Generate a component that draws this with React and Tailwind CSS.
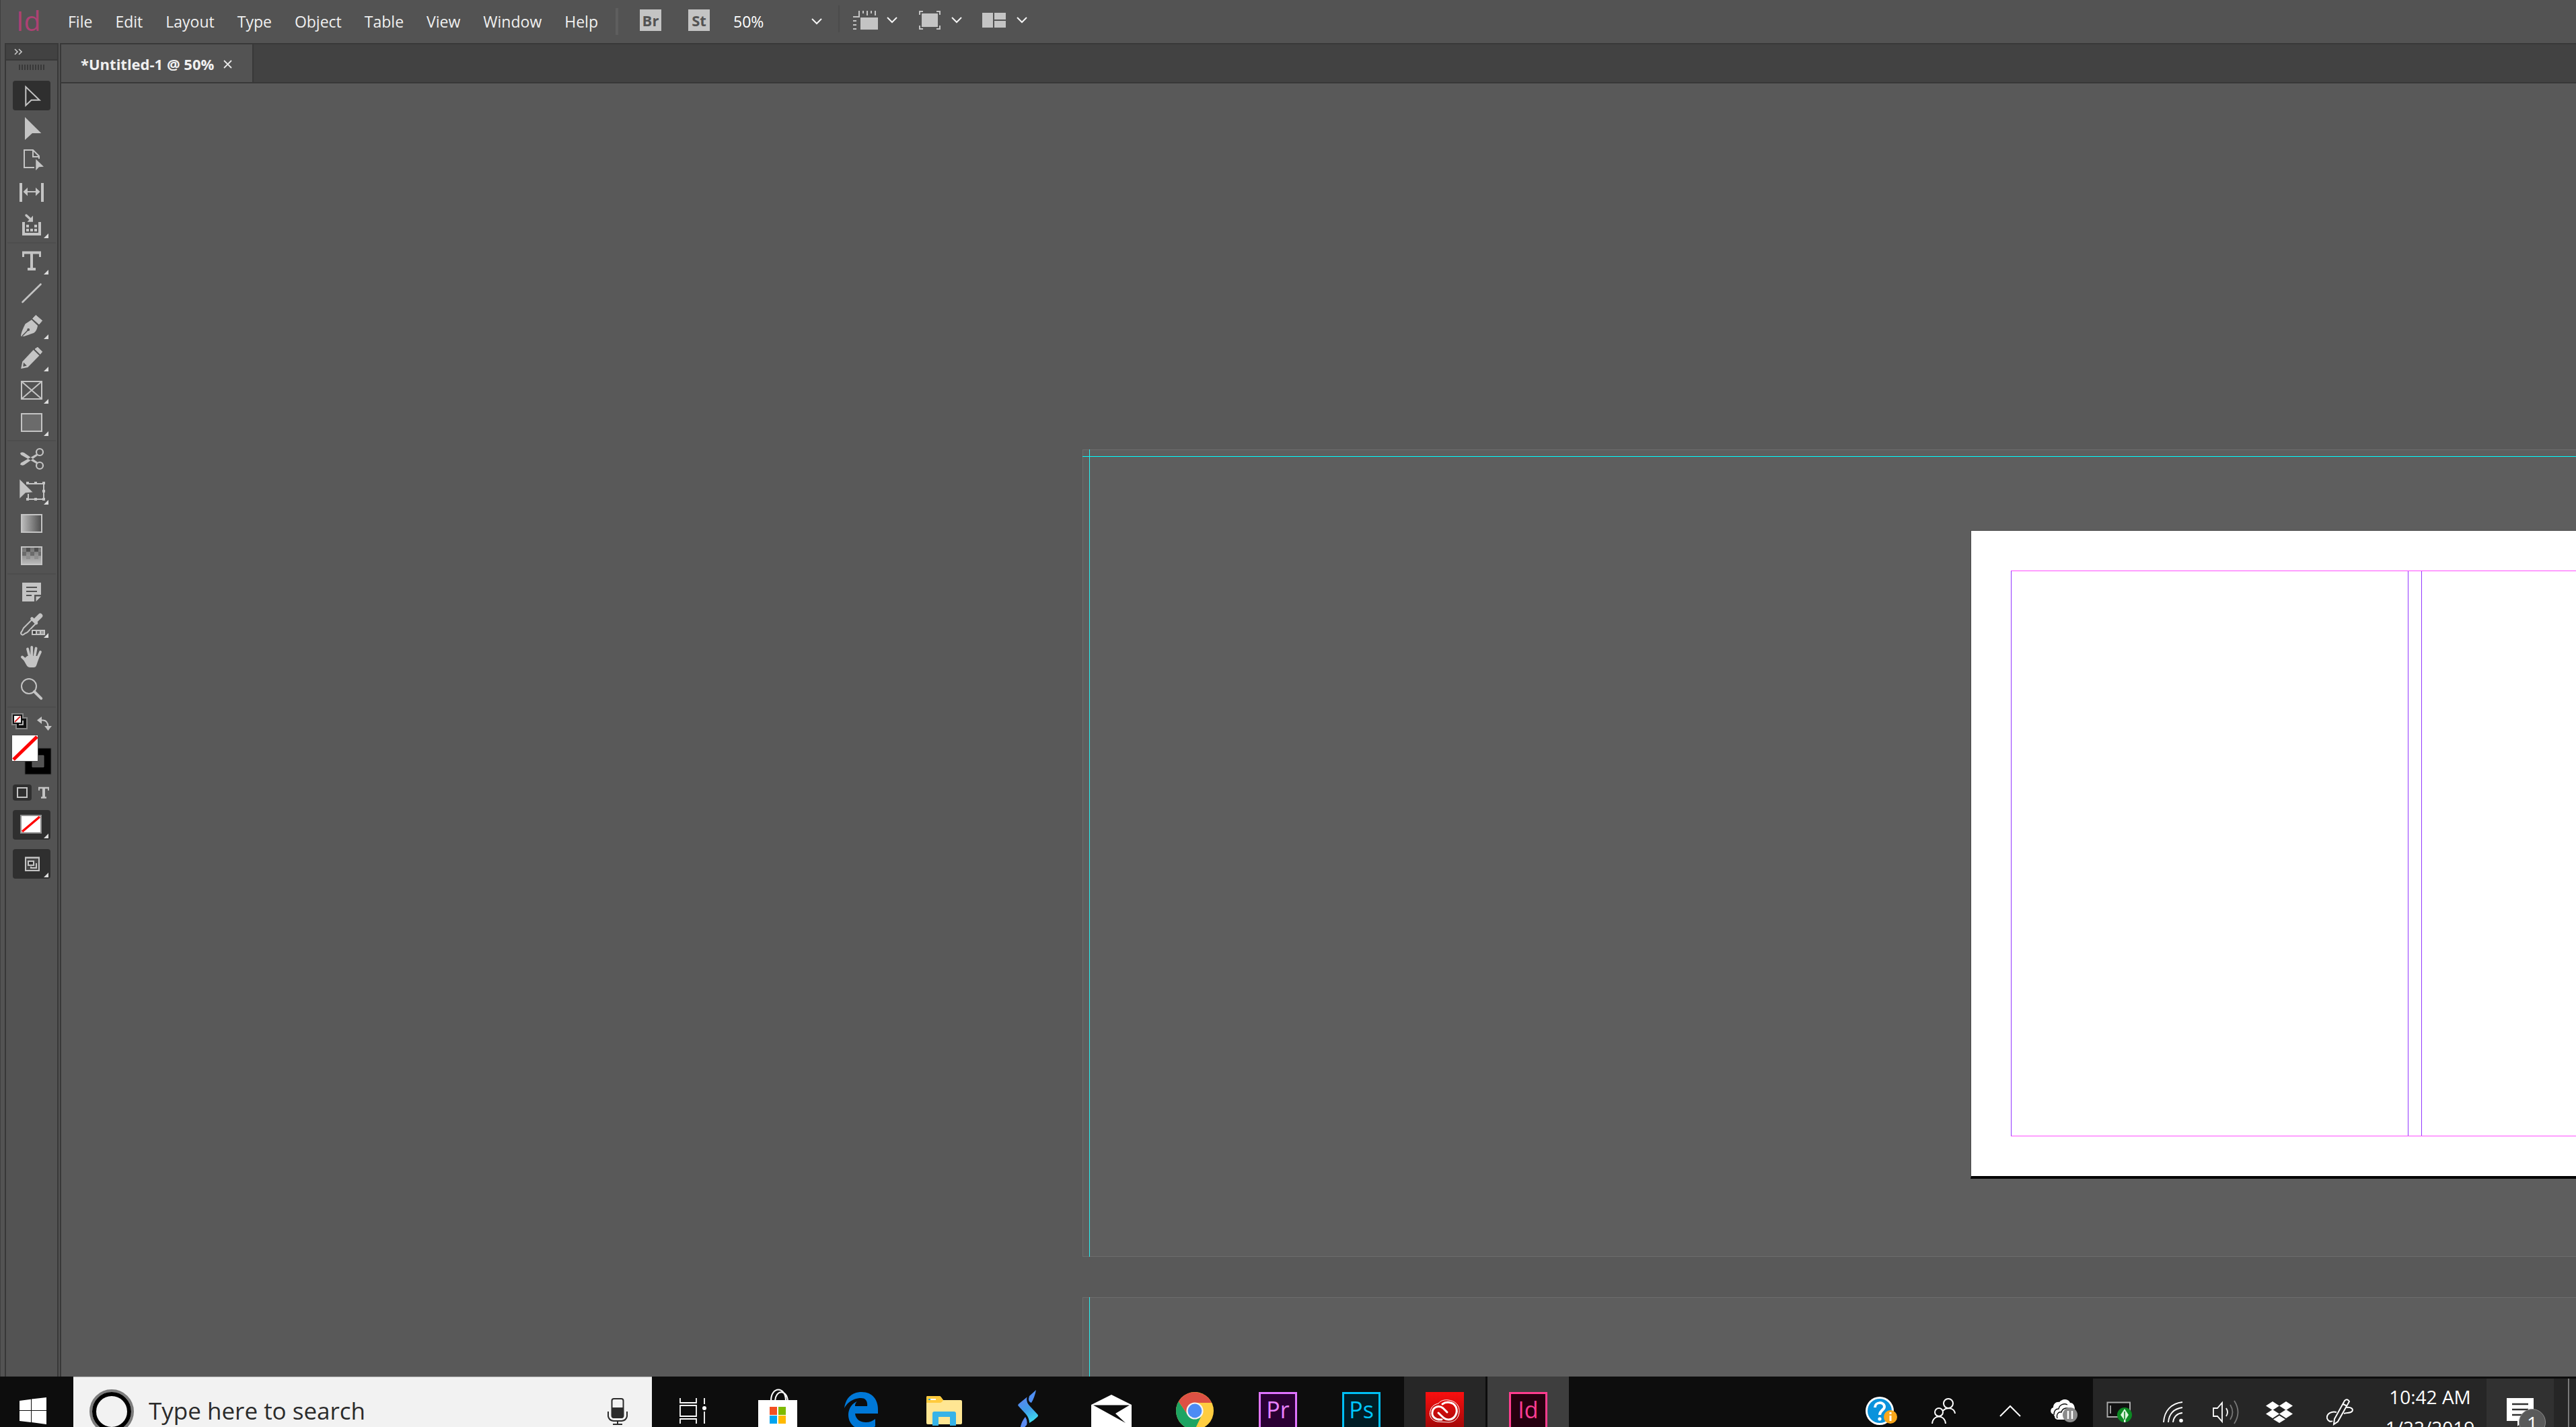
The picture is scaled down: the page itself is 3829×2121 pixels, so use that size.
import React from 'react'

const menus = ['File', 'Edit', 'Layout', 'Type', 'Object', 'Table', 'View', 'Window', 'Help']

const Chevron = () => (
  <svg className="w-4 h-[10px]" viewBox="0 0 16 10" fill="none" stroke="#f4f4f4" strokeWidth="2">
    <path d="M1 1 L8 8 L15 1" />
  </svg>
)

const MenuBar = () => {
  return (
    <header className="h-16 shrink-0 flex items-center border-l border-[#3f3f3f] text-[#f0f0f0] text-[23px]">
      <span className="w-[100px] pl-[23px] pb-1 text-[41px] leading-[56px] font-medium text-[#ad4173]">Id</span>
      <nav className="flex gap-[34px] pb-px">
        {menus.map((m) => (
          <button key={m} type="button" className="leading-8">{m}</button>
        ))}
      </nav>
      <div className="ml-[26px] w-1 h-10 bg-[#5e5e5e]" />
      <button type="button" className="ml-8 mb-1 size-8 bg-[#c4c4c4] text-[#535353] font-bold text-[22px] leading-8">Br</button>
      <button type="button" className="ml-10 mb-1 size-8 bg-[#c4c4c4] text-[#535353] font-bold text-[22px] leading-8">St</button>
      <div className="relative ml-[35px] w-[132px] flex items-center">
        <select aria-label="Zoom level" defaultValue="50%" className="appearance-none w-full bg-transparent leading-8 text-white">
          <option>50%</option>
        </select>
        <span className="absolute right-0 pointer-events-none"><Chevron /></span>
      </div>
      <div className="ml-6 mb-2 w-[2px] h-10 bg-[#4b4b4b]" />
      <button type="button" aria-label="View options" className="ml-5 mb-1 flex items-center gap-[13px]">
        <svg className="w-[37px] h-7" viewBox="0 0 37 28" fill="none" stroke="#c4c4c4" strokeWidth="2">
          <path d="M0 9 H9 V0 M15 0 V4 M21 0 V7 M27 0 V4 M33 0 V7 M0 15 H5 M0 21 H5 M0 27 H5" />
          <path d="M11 10 H37 V28 H11 Z" fill="#c4c4c4" stroke="none" />
        </svg>
        <Chevron />
      </button>
      <button type="button" aria-label="Screen mode" className="ml-8 mb-1 flex items-center gap-4">
        <svg className="w-8 h-7" viewBox="0 0 32 28" fill="none" stroke="#c4c4c4" strokeWidth="2">
          <path d="M1 6 V1 H6 M26 1 H31 V6 M31 22 V27 H26 M6 27 H1 V22" />
          <path d="M4 4 H28 V24 H4 Z" fill="#c4c4c4" stroke="none" />
        </svg>
        <Chevron />
      </button>
      <button type="button" aria-label="Arrange documents" className="ml-[30px] mb-1 flex items-center gap-4">
        <svg className="w-[35px] h-[22px]" viewBox="0 0 35 22" fill="#c4c4c4">
          <path d="M0 0 H16 V22 H0 Z M18 0 H35 V10 H18 Z M18 12 H35 V22 H18 Z" />
        </svg>
        <Chevron />
      </button>
    </header>
  )
}

const C = '#c4c4c4'
const D = '#535353'

const tools = [
  { name: 'Selection', active: true, art: <path d="M19.3 9 V36.6 L27.6 28.7 H39.6 Z" fill="none" stroke={C} strokeWidth="2" /> },
  { name: 'Direct selection', art: <path d="M18 6 V40 L29 30 H42.3 Z" fill={C} /> },
  {
    name: 'Page',
    art: (
      <>
        <path d="M32 33 H17 V7 H30 L39 16 V20 M30 7 V17 H39" fill="none" stroke={C} strokeWidth="2" />
        <path d="M34.3 20.5 V37.3 L39 32.3 L46 31.7 Z" fill={C} />
      </>
    ),
  },
  {
    name: 'Gap',
    art: (
      <>
        <path d="M10 8 H14 V36 H10 Z M42 8 H46 V36 H42 Z M15.5 21 L22 14.7 V27.3 Z M40.5 21 L34 14.7 V27.3 Z" fill={C} />
        <path d="M20 21 H36" stroke={C} strokeWidth="2" />
      </>
    ),
  },
  {
    name: 'Content collector',
    more: true,
    art: (
      <>
        <path d="M16 18 V36 H40 V18" fill="none" stroke={C} strokeWidth="4" />
        <path d="M20 22h4v4h-4z M32 22h4v4h-4z M20 28h4v4h-4z M26 28h4v4h-4z M32 28h4v4h-4z" fill={C} />
        <path d="M20 8 L27 14.5" stroke={C} strokeWidth="3.4" strokeLinecap="round" />
        <path d="M30 8.5 V17.8 H21.5 Z" fill={C} />
      </>
    ),
  },
  null,
  {
    name: 'Type',
    more: true,
    art: (
      <g fill="none" stroke={C}>
        <path d="M14 9.5 H42 M28 10 V34 M22 34 H34" strokeWidth="4" />
        <path d="M15.5 9 V16 M40.5 9 V16" strokeWidth="3" />
      </g>
    ),
  },
  { name: 'Line', art: <path d="M14.5 35 L41.5 8.5" stroke={C} strokeWidth="2.6" strokeLinecap="round" /> },
  {
    name: 'Pen',
    more: true,
    art: (
      <>
        <path d="M34.2 6.6 L43.6 14.6 L39 20 L29.6 11.6 Z" fill={C} stroke={C} strokeLinejoin="round" />
        <path d="M28 13.3 L37 22 C36.4 27 34 31.5 31 33 C26 34.5 20 37 16.5 38 L12 37.6 C12.4 32 16 25 18.5 19.5 Z" fill={C} />
        <path d="M14 37.5 L22.5 28.8" stroke={D} strokeWidth="1.6" />
        <circle cx="23.2" cy="28" r="2" fill={D} />
      </>
    ),
  },
  {
    name: 'Pencil',
    more: true,
    art: (
      <>
        <path d="M37 6.2 L43.6 12.8 L40.8 16.4 L33 8.8 Z" fill={C} stroke={C} strokeLinejoin="round" />
        <path d="M30.7 10 L39.4 18.6 L22.3 36 L12.2 38 L14.3 27.5 Z" fill={C} />
        <path d="M16 28.8 L20.8 33.6 L15.3 35 Z" fill={D} />
      </>
    ),
  },
  { name: 'Rectangle frame', more: true, art: <path d="M13 9 H43 V35 H13 Z L43 35 M43 9 L13 35" fill="none" stroke={C} strokeWidth="2" /> },
  { name: 'Rectangle', more: true, art: <path d="M13 9 H43 V35 H13 Z" fill="#6b6b6b" stroke={C} strokeWidth="2" /> },
  null,
  {
    name: 'Scissors',
    art: (
      <>
        <g fill="none" stroke={C} strokeWidth="2.2">
          <circle cx="40" cy="12" r="5" />
          <circle cx="40" cy="32" r="5" />
        </g>
        <path d="M11 13.4 C13 12 15 12 17 13 L37 27 L35.2 29.2 L27 24.5 L12 16 Z M11 30.6 C13 32 15 32 17 31 L37 17 L35.2 14.8 L27 19.5 L12 28 Z" fill={C} />
      </>
    ),
  },
  {
    name: 'Free transform',
    more: true,
    art: (
      <>
        <path d="M23 11 H46 V34 H23 V26" fill="none" stroke={C} strokeWidth="2" />
        <path d="M20 8h4v4h-4z M32 8h4v4h-4z M44 8h4v4h-4z M44 20h4v4h-4z M44 32h4v4h-4z M32 32h4v4h-4z M20 32h4v4h-4z" fill={C} />
        <path d="M10 4 V33.3 L18.8 24.8 L30 23.7 Z" fill={C} stroke={D} strokeWidth="0.6" />
      </>
    ),
  },
  {
    name: 'Gradient swatch',
    art: (
      <>
        <linearGradient id="swatch"><stop offset="0" stopColor="#bdbdbd" /><stop offset="1" stopColor="#4c4c4c" /></linearGradient>
        <path d="M13 9 H43 V35 H13 Z" fill="url(#swatch)" stroke={C} strokeWidth="2" />
      </>
    ),
  },
  {
    name: 'Gradient feather',
    art: (
      <>
        <linearGradient id="feather" x2="0" y2="1"><stop offset="0" stopColor="#6b6b6b" /><stop offset="1" stopColor="#bdbdbd" /></linearGradient>
        <path d="M13 9 H43 V35 H13 Z" fill="url(#feather)" stroke={C} strokeWidth="2" />
        <path d="M20 10h6v6h-6z M32 10h6v6h-6z" fill="#505050" />
        <path d="M14 16h6v6h-6z M26 16h6v6h-6z M38 16h4v6h-4z" fill="#6b6b6b" />
        <path d="M20 22h6v5h-6z M32 22h6v5h-6z" fill="#8e8e8e" />
      </>
    ),
  },
  null,
  {
    name: 'Note',
    art: (
      <>
        <path d="M14 8 H42 V26 H32 V36 H14 Z M34.5 28.5 H42 L34.5 36 Z" fill={C} />
        <path d="M20 15 H36 M20 21 H36 M20 27 H28" stroke={D} strokeWidth="2" />
      </>
    ),
  },
  {
    name: 'Color theme',
    more: true,
    art: (
      <>
        <path d="M28.5 15 L16 27.5 C14.5 29.5 14.8 31 13 33 C10.5 36 14 39 16.5 36.8 C18.5 34.5 20.5 35 22 33.5 L34 21" fill="none" stroke={C} strokeWidth="2" />
        <path d="M28.5 13.5 L35 20" stroke={C} strokeWidth="4.6" strokeLinecap="round" />
        <path d="M34 16 L40.8 9.2" stroke={C} strokeWidth="7" strokeLinecap="round" />
        <path d="M26.5 29 H49 V39 H26.5 Z" fill={D} />
        <path d="M28 30 H48 V38 H28 Z" fill={C} />
        <path d="M30 32h4v4h-4z" fill="#3c3c3c" />
        <path d="M36 32h4v4h-4z" fill="#6b6b6b" />
        <path d="M42 32h4v4h-4z" fill="#989898" />
      </>
    ),
  },
  {
    name: 'Hand',
    art: (
      <>
        <g stroke={C} strokeWidth="3.8" strokeLinecap="round">
          <path d="M22 10.5 L25.5 24 M28.2 8 V24 M34.6 9.5 L32 24 M41 15 L36 26" />
          <path d="M14 22.5 L22 30" strokeWidth="4" />
        </g>
        <path d="M21.5 21 H37.5 L38.5 25 L35.5 34 C34.5 37 33 38 31 38 H26 C23 38 21.5 36.5 20 34 L15.5 26 Z" fill={C} />
      </>
    ),
  },
  {
    name: 'Zoom',
    art: (
      <g fill="none" stroke={C}>
        <circle cx="24" cy="18" r="11" strokeWidth="2" />
        <path d="M32 26 L42.2 36.2" strokeWidth="4" strokeLinecap="round" />
      </g>
    ),
  },
]

const ToolButton = ({ tool }) => (
  <button type="button" aria-label={tool.name} className={tool.active ? 'block rounded bg-[#2f2f2f]' : 'block rounded'}>
    <svg className="block w-14 h-11" viewBox="0 0 56 44">
      {tool.art}
      {tool.more && <path d="M53 35 V42 H46 Z" fill="#dcdcdc" />}
    </svg>
  </button>
)

const Toolbox = () => {
  return (
    <aside className="w-20 shrink-0 border-t-2 border-x-2 border-[#383838]">
      <div className="h-6 border-b-2 border-[#383838] bg-[#424242] pl-3 flex items-center">
        <svg className="w-3 h-[10px]" viewBox="0 0 12 10" fill="none" stroke="#c9c9c9" strokeWidth="1.6">
          <path d="M1 1 L5 5 L1 9 M7 1 L11 5 L7 9" />
        </svg>
      </div>
      <svg className="mt-[6px] mx-auto w-10 h-2" viewBox="0 0 40 8" stroke="#383838" strokeWidth="2">
        <path d="M2 0V8 M6 0V8 M10 0V8 M14 0V8 M18 0V8 M22 0V8 M26 0V8 M30 0V8 M34 0V8 M38 0V8" />
      </svg>
      <div className="mt-4 flex flex-col items-center gap-1">
        {tools.map((t, i) => (t ? <ToolButton key={t.name} tool={t} /> : <div key={i} className="w-[72px] h-[2px] bg-[#4d4d4d]" />))}
        <div className="w-[72px] h-[2px] bg-[#4d4d4d]" />
      </div>
      <div className="mt-[5px] px-2 flex justify-between">
        <button type="button" aria-label="Default fill and stroke">
          <svg className="w-6 h-6" viewBox="0 0 24 24">
            <path d="M0 0 H18 V6 H24 V24 H6 V18 H0 Z" fill="#858585" />
            <path d="M2 2 H16 V8 H22 V22 H8 V16 H2 Z" fill="#111" />
            <path d="M4 4 H14 V14 H4 Z" fill="#fff" />
            <path d="M5 13 L13 5" stroke="#d22" strokeWidth="1.8" />
            <path d="M17 11 V17 H11" fill="none" stroke="#ddd" strokeWidth="1.6" />
          </svg>
        </button>
        <button type="button" aria-label="Swap fill and stroke" className="mt-2">
          <svg className="w-[22px] h-[22px]" viewBox="0 0 22 22">
            <path d="M6 5.5 H9 Q16 6 16.5 15" fill="none" stroke={C} strokeWidth="2" />
            <path d="M0 5.5 L7 0 V11 Z M11 14 H22 L16.5 21 Z" fill={C} />
          </svg>
        </button>
      </div>
      <svg className="mt-[5px] ml-2 w-[60px] h-[60px]" viewBox="0 0 60 60">
        <path d="M20 20 H59 V59 H20 Z" fill="#000" stroke="#454545" />
        <path d="M31 31 H48 V48 H31 Z" fill={D} stroke="#606060" />
        <path d="M0.5 0.5 H39.5 V39.5 H0.5 Z" fill="#fff" stroke="#484848" />
        <path d="M3 37 L38 3" stroke="#f00" strokeWidth="5" />
      </svg>
      <div className="mt-[14px] px-[10px] flex gap-[10px] items-center">
        <button type="button" aria-label="Formatting affects container" className="rounded bg-[#2f2f2f]">
          <svg className="w-7 h-6" viewBox="0 0 28 24"><path d="M7 5 H21 V19 H7 Z" fill="none" stroke={C} strokeWidth="2" /></svg>
        </button>
        <button type="button" aria-label="Formatting affects text">
          <svg className="w-4 h-[18px]" viewBox="0 0 16 18" fill="none" stroke={C}>
            <path d="M0 2 H16 M4 16.5 H12" strokeWidth="2.4" />
            <path d="M8 2 V17" strokeWidth="4" />
            <path d="M1 2 V6 M15 2 V6" strokeWidth="1.8" />
          </svg>
        </button>
      </div>
      <div className="mt-[14px] flex flex-col items-center gap-[14px]">
        <ToolButton
          tool={{
            name: 'Apply none',
            active: true,
            more: true,
            art: (
              <>
                <path d="M12 8 H42 V34 H12 Z" fill="#fff" stroke="#8f8f8f" strokeWidth="2" />
                <path d="M14 32 L40 10" stroke="#f00" strokeWidth="3.4" />
              </>
            ),
          }}
        />
        <ToolButton
          tool={{
            name: 'View mode',
            active: true,
            more: true,
            art: (
              <g fill="none" stroke={C} strokeWidth="2">
                <path d="M19 13 H39 V32 H19 Z M18 12.5 H40" fill="#474747" />
                <path d="M23 18 H31 V24 H23 Z" fill="#2f2f2f" />
                <path d="M34 22 H35 V28 H27 V26" />
              </g>
            ),
          }}
        />
      </div>
    </aside>
  )
}

const DocumentWindow = () => {
  return (
    <main className="flex-1 min-w-0 ml-[2px] flex flex-col border-t-2 border-l-2 border-[#383838]">
      <div className="h-[58px] shrink-0 flex border-b-2 border-[#383838] bg-[#424242]">
        <div className="flex items-center gap-[14px] pl-[29px] pr-[30px] pt-[2px] border-r-2 border-[#383838] bg-[#535353] text-[#f0f0f0]">
          <span className="text-[22px] font-bold">*Untitled-1 @ 50%</span>
          <button type="button" aria-label="Close tab">
            <svg className="w-[13px] h-[13px]" viewBox="0 0 13 13" stroke="#e8e8e8" strokeWidth="1.8"><path d="M1 1 L12 12 M12 1 L1 12" /></svg>
          </button>
        </div>
      </div>
      {/* pasteboard with the first spread and the top of the next one */}
      <div className="relative flex-1 overflow-hidden bg-[#595959]">
        <div className="absolute left-[1518px] top-[544px] right-0 h-[1200px] border border-r-0 border-[#6d6d6d] bg-[#5e5e5e]" />
        <div className="absolute left-[1528px] top-[544px] w-px h-[1200px] bg-[#28eef0]" />
        <div className="absolute left-[1518px] top-[554px] right-0 h-px bg-[#00ffff]" />
        <div className="absolute left-[1518px] top-[1804px] right-0 bottom-0 border-t border-l border-[#6d6d6d] bg-[#5e5e5e]" />
        <div className="absolute left-[1528px] top-[1804px] w-px bottom-0 bg-[#28eef0]" />
        <div className="absolute left-[2838px] top-[664px] right-0 h-[964px] border-t border-l border-[#4a4a4a] border-b-4 border-b-black bg-white">
          <div className="absolute left-[59px] top-[59px] right-0 h-[841px] border-y border-y-[#ff4cff] border-l border-l-[#9437ff]">
            <div className="absolute left-[589px] top-0 bottom-0 w-[21px] border-x border-[#9437ff]" />
          </div>
        </div>
      </div>
    </main>
  )
}

const AppTile = ({ label, tile }) => (
  <span className={`size-[57px] border-[3px] pb-1 flex items-center justify-center text-[34px] leading-none font-medium ${tile}`}>{label}</span>
)

const apps = [
  {
    name: 'Store',
    icon: (
      <svg className="w-[58px] h-[66px]" viewBox="0 0 58 66">
        <path d="M19 18 C19 -4 41 -4 41 18 M25 18 C26 2 42 0 44 18" fill="none" stroke="#fff" strokeWidth="2" />
        <path d="M0 17 H58 V62 H0 Z" fill="#fff" />
        <path d="M17 27h11v12h-11z" fill="#f25022" />
        <path d="M30 27h11v12h-11z" fill="#7fba00" />
        <path d="M17 40h11v12h-11z" fill="#00a4ef" />
        <path d="M30 40h11v12h-11z" fill="#ffb900" />
      </svg>
    ),
  },
  {
    name: 'Edge',
    icon: (
      <svg className="w-[50px] h-14" viewBox="0 0 50 56">
        <path d="M0 24 C2 8 12 0 26 0 C42 0 50 12 50 26 V32 H16 C17 41 24 45 32 45 C38 45 42 43 46 40 V51 C41 54 36 56 30 56 C15 56 6 46 6 34 C6 25 11 17 19 14 C16 17 16 19 16 21 H34 C35 13 31 9 25 9 C14 9 5 15 0 24 Z" fill="#0078d7" />
      </svg>
    ),
  },
  {
    name: 'File Explorer',
    icon: (
      <svg className="w-[53px] h-[46px]" viewBox="0 0 53 46">
        <path d="M0 3 Q0 1 2 1 H19 Q21 1 22 3 L25 7 H51 Q53 7 53 9 V41 Q53 43 51 43 H2 Q0 43 0 41 Z" fill="#ffe693" />
        <path d="M0 3 Q0 1 2 1 H19 Q21 1 22 3 L25 7 Q23 11 20 11 H0 Z" fill="#ffcb3d" />
        <path d="M3 5 H14 V7 H3 Z" fill="#fff" />
        <path d="M3 5 H6 V7 H3 Z" fill="#2fa8e0" />
        <path d="M9 45 V27 Q9 24 12 24 H41 Q44 24 44 27 V45 H35 V32 H18 V45 Z" fill="#36b3e8" />
      </svg>
    ),
  },
  {
    name: 'Sway',
    icon: (
      <svg className="w-[30px] h-[62px]" viewBox="0 0 30 62">
        <linearGradient id="ribbon" x1="0.2" y1="0" x2="0.6" y2="1"><stop offset="0" stopColor="#5c86f0" /><stop offset="0.5" stopColor="#3f9be8" /><stop offset="1" stopColor="#3fdcf0" /></linearGradient>
        <path d="M27 0 Q25 11 20 19 Q14 17 17 9 Z" fill="#4f8ff2" />
        <path d="M13.5 10.5 Q12 18 17 23 L29 36 Q31 38 29 40 Q24 45 17 49 Q17 42 12 36 L1 24 Q-1 22 2 20 Z" fill="url(#ribbon)" />
        <path d="M11 40 Q15 46 13 52 L4 62 V54 Q6 46 11 40 Z" fill="#5c8cf2" />
      </svg>
    ),
  },
  {
    name: 'Mail',
    icon: (
      <svg className="w-[60px] h-12" viewBox="0 0 60 48">
        <path d="M0 15 L30 0 L60 15 V48 H0 Z" fill="#fff" />
        <path d="M3 15.5 H57 L36 28 L51 42 Z" fill="#0d0d0d" />
      </svg>
    ),
  },
  {
    name: 'Chrome',
    icon: (
      <svg className="size-14" viewBox="0 0 56 56">
        <circle cx="28" cy="28" r="28" fill="#ffcd40" />
        <path d="M28 28 L38.4 34 L28 56 A28 28 0 0 1 3.8 14 L17.6 34 Z" fill="#1da462" />
        <path d="M28 16 H53 A28 28 0 0 0 3.8 14 L17.6 34 L28 28 Z" fill="#dd5144" />
        <circle cx="28" cy="28" r="12.6" fill="#f4f4f4" />
        <circle cx="28" cy="28" r="10.4" fill="#4c8bf5" />
      </svg>
    ),
  },
  { name: 'Premiere Pro', icon: <AppTile label="Pr" tile="border-[#e073ff] text-[#e882ff] bg-[#2a0033]" /> },
  { name: 'Photoshop', icon: <AppTile label="Ps" tile="border-[#00c0f5] text-[#00c8ff] bg-[#001d26]" /> },
  {
    name: 'Creative Cloud',
    state: 'bg-[#272727]',
    icon: (
      <svg className="size-[57px]" viewBox="0 0 57 57">
        <linearGradient id="cc" x2="0" y2="1"><stop offset="0" stopColor="#fa0f0f" /><stop offset="1" stopColor="#9c0808" /></linearGradient>
        <path d="M0 0 H57 V57 H0 Z" fill="url(#cc)" />
        <path d="M17 44 C8 42 5 35 7 28 C9 20 15 18 19 17 C22 13 28 11 34 12 C44 13 51 20 50 30 C49 39 43 45 34 45 Z" fill="none" stroke="#fff" strokeWidth="1" />
        <g fill="none" stroke="#fff" strokeWidth="3" strokeLinecap="round">
          <path d="M24 41 C14 42 9 36 10 30 C11 22 20 19 26 24 L32 30" />
          <path d="M25 18 C30 14 41 14 45 22 C49 31 43 41 34 41 C29 41 27 39 19 31" />
        </g>
      </svg>
    ),
  },
  { name: 'InDesign', state: 'bg-[#3e3e3e]', icon: <AppTile label="Id" tile="border-[#ff3d8f] text-[#ff3d93] bg-[#26000f]" /> },
]

const SystemTray = () => {
  return (
    <div className="ml-auto flex text-white">
      <button type="button" aria-label="Help" className="w-[60px] flex items-center justify-center">
        <svg className="w-12 h-11" viewBox="0 0 48 44">
          <circle cx="21" cy="22" r="21" fill="#fff" />
          <circle cx="21" cy="22" r="18" fill="#0a93dc" />
          <path d="M14 17 C14 8 28 8 28 16 C28 21 21 21 21 28" fill="none" stroke="#fff" strokeWidth="4" />
          <circle cx="21" cy="34" r="2.6" fill="#fff" />
          <circle cx="37" cy="31" r="10" fill="#f9a71a" />
          <path d="M37 29 V37 M37 24 V27" stroke="#fff" strokeWidth="3" />
        </svg>
      </button>
      <button type="button" aria-label="People" className="w-[124px] flex items-center justify-center">
        <svg className="w-9 h-[38px]" viewBox="0 0 36 38" fill="none" stroke="#fff" strokeWidth="2">
          <circle cx="25" cy="8" r="7" />
          <circle cx="11" cy="21" r="6" />
          <path d="M1 38 C2 24 20 24 21 38 M17 19 C22 13 34 14 35 23" />
        </svg>
      </button>
      <button type="button" aria-label="Show hidden icons" className="w-[74px] flex items-center justify-center">
        <svg className="w-8 h-[18px]" viewBox="0 0 32 18" fill="none" stroke="#fff" strokeWidth="2"><path d="M1 17 L16 2 L31 17" /></svg>
      </button>
      <button type="button" aria-label="OneDrive" className="w-[86px] flex items-center justify-center">
        <svg className="w-10 h-[34px]" viewBox="0 0 40 34">
          <path d="M4 22 C-1 21 -1 13 4 12 C4 6 9 3 13 4 C18 -2 27 -1 29 5 C34 5 36 10 36 14 L28 30 H12 C8 30 6 28 6 25 Z" fill="#fff" />
          <path d="M5 23 C5 17 8 14 12 14 C13 8 20 5 25 8 M10 28 C8 22 12 18 16 19 C18 12 27 11 30 16" fill="none" stroke="#0d0d0d" strokeWidth="1.4" />
          <circle cx="29" cy="23" r="11" fill="#8b8b8b" />
          <path d="M26 17 V29 M32 17 V29" stroke="#fff" strokeWidth="2.4" />
        </svg>
      </button>
      <div className="mt-[3px] flex bg-[#262626]">
        <button type="button" aria-label="Battery" className="w-[79px] flex items-center justify-center">
          <svg className="w-[39px] h-8" viewBox="0 0 39 32">
            <path d="M1.5 1.5 H35 V23 H1.5 Z" fill="#111" stroke="#aaa" strokeWidth="2" />
            <path d="M6 6 V18" stroke="#999" strokeWidth="2" />
            <circle cx="27" cy="20" r="11" fill="#0d8a24" />
            <path d="M27 11 L33 20 L28.5 27 V31 H26 V27 L21 20 Z" fill="#d9f5dc" />
            <path d="M27 15 V27" stroke="#0d8a24" strokeWidth="1.6" />
          </svg>
        </button>
        <button type="button" aria-label="Network" className="w-[79px] flex items-center justify-center">
          <svg className="w-[30px] h-8" viewBox="0 0 30 32" fill="none" stroke="#fff" strokeWidth="1.8">
            <path d="M1 31 C2 14 12 3 29 1 M8 31 C9 18 16 11 29 9 M15 31 C16 23 20 18 29 17" />
            <circle cx="27" cy="28.5" r="2.8" fill="#fff" stroke="none" />
          </svg>
        </button>
        <button type="button" aria-label="Volume" className="w-[79px] flex items-center justify-center">
          <svg className="w-10 h-9" viewBox="0 0 40 36" fill="none" strokeWidth="1.8">
            <path d="M1 12 H7 L14 4 V32 L7 24 H1 Z M20 12 Q24 18 20 24" stroke="#fff" />
            <path d="M26 7 Q33 18 26 29 M32 1 Q43 18 32 35" stroke="#777" />
          </svg>
        </button>
        <button type="button" aria-label="Dropbox" className="w-[79px] flex items-center justify-center">
          <svg className="w-10 h-8" viewBox="0 0 40 32" fill="#fff">
            <path d="M10 0 L20 6.5 L10 13 L0 6.5 Z M30 0 L40 6.5 L30 13 L20 6.5 Z M10 12 L20 18.5 L10 25 L0 18.5 Z M30 12 L40 18.5 L30 25 L20 18.5 Z M20 21 L29 26.5 L20 32 L11 26.5 Z" />
          </svg>
        </button>
        <button type="button" aria-label="Windows Ink" className="w-[101px] flex items-center justify-center">
          <svg className="w-10 h-10" viewBox="0 0 40 40" fill="none" stroke="#fff" strokeWidth="2">
            <path d="M27 3 Q31 -1 34 4 L17 34 L11 38 L12 30 Z M25 8 L31 11" />
            <path d="M15 20 C8 18 0 22 1 29 C2 33 6 35 9 33 M30 13 C36 12 41 15 38 19 C35 22 30 20 26 22" />
          </svg>
        </button>
        <button type="button" className="w-[168px] text-[28px] leading-[46px] text-center">
          <span className="block">10:42 AM</span>
          <span className="block">1/22/2019</span>
        </button>
        <button type="button" aria-label="Notifications, 1 new" className="relative w-[100px] bg-[#313131] flex items-center justify-center">
          <svg className="w-10 h-[42px]" viewBox="0 0 40 42">
            <path d="M0 0 H40 V34 H24 L16 42 V34 H0 Z" fill="#fff" />
            <path d="M8 9 H32 M8 17 H32 M8 25 H24" stroke="#313131" strokeWidth="2.4" />
          </svg>
          <span className="absolute left-12 top-[45px] size-10 rounded-full border border-[#8b8b8b] bg-[#5a5a5a] text-[28px] leading-10">1</span>
        </button>
        <div className="ml-[21px] w-3 border-l-2 border-[#7a7a7a]" />
      </div>
    </div>
  )
}

const Taskbar = () => {
  return (
    <footer className="h-[75px] shrink-0 overflow-hidden bg-[#0d0d0d]">
      <div className="h-[102px] flex">
        <button type="button" aria-label="Start" className="w-[109px] pr-[11px] flex items-center justify-center">
          <svg className="w-10 h-10" viewBox="0 0 40 40" fill="#fff"><path d="M0 5 L17 2.7 V19 H0 Z M18 2.5 L40 0 V19 H18 Z M0 20 H17 V37 L0 35 Z M18 20 H40 V40 L18 37 Z" /></svg>
        </button>
        <label className="w-[860px] border-t border-[#b5b5b5] bg-[#f2f2f2] pl-6 pr-9 flex items-center">
          <svg className="size-[66px]" viewBox="0 0 66 66" fill="none">
            <circle cx="33" cy="33" r="31" stroke="#7d7d7d" strokeWidth="4" />
            <circle cx="33" cy="33" r="26" stroke="#000" strokeWidth="6" />
          </svg>
          <input type="text" aria-label="Search" placeholder="Type here to search" className="ml-[22px] flex-1 min-w-0 bg-transparent text-[35px] placeholder:text-[#2b2b2b] outline-none" />
          <svg className="w-[30px] h-10" viewBox="0 0 30 40" fill="none" stroke="#2b2b2b" strokeWidth="2">
            <rect x="6.5" y="1" width="17" height="28" rx="3" />
            <path d="M7 15 H23 V26 Q23 29 20 29 H10 Q7 29 7 26 Z" fill="#2b2b2b" />
            <path d="M1 20 V27 Q2 33 9 34 H21 Q28 33 29 27 V20 M15 34 V38 M8 39 H22" />
          </svg>
        </label>
        <button type="button" aria-label="Task view" className="w-[122px] flex items-center justify-center">
          <svg className="w-10 h-[38px]" viewBox="0 0 40 38" fill="none" stroke="#fff" strokeWidth="1.8">
            <path d="M1 0 V7 H25 V0 M1 11 H25 V27 H1 Z M1 38 V31 H25 V38 M37 0 V9 M37 20 V38" />
            <circle cx="37" cy="15" r="3" fill="#fff" stroke="none" />
          </svg>
        </button>
        <div className="ml-1 flex gap-[3px]">
          {apps.map((a) => (
            <button key={a.name} type="button" aria-label={a.name} className={`w-[121px] flex items-center justify-center ${a.state || ''}`}>{a.icon}</button>
          ))}
        </div>
        <SystemTray />
      </div>
    </footer>
  )
}

export default function App() {
  return (
    <div className="h-screen flex flex-col overflow-hidden bg-[#535353] font-['Open_Sans','Noto_Sans',sans-serif]">
      <MenuBar />
      <div className="flex-1 min-h-0 flex">
        <div className="w-[7px] shrink-0 border-l border-[#3f3f3f]" />
        <Toolbox />
        <DocumentWindow />
      </div>
      <Taskbar />
    </div>
  )
}
